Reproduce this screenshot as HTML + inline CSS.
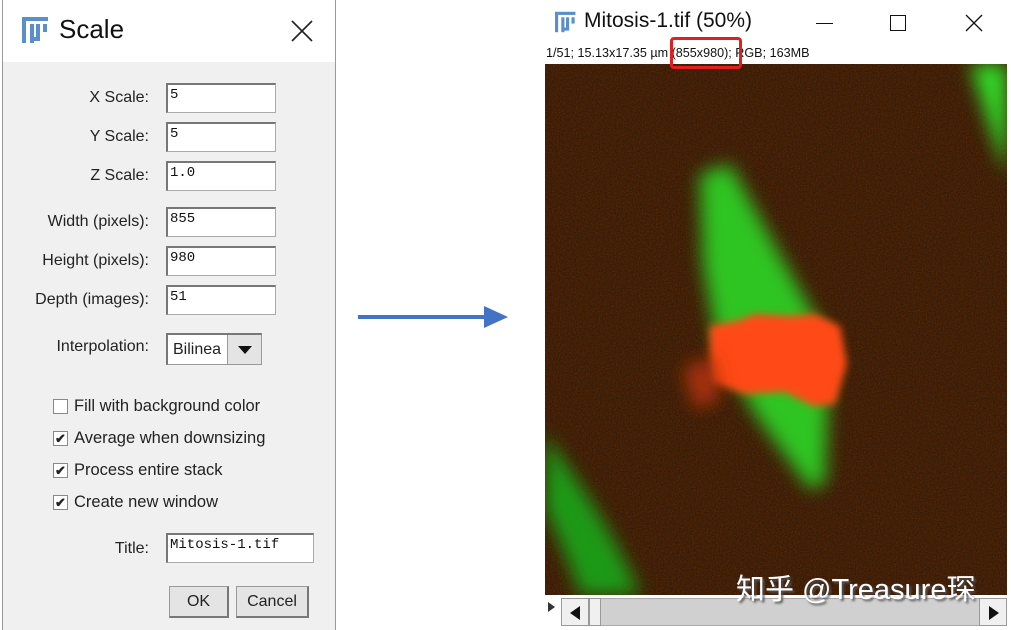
<!DOCTYPE html>
<html><head><meta charset="utf-8">
<style>
*{box-sizing:border-box;margin:0;padding:0}
body{width:1011px;height:630px;background:#fff;position:relative;overflow:hidden;font-family:"Liberation Sans","Noto Sans CJK SC",sans-serif;color:#222}
.abs{position:absolute}
.dlg{left:2px;top:0;width:334px;height:630px;border-left:1px solid #999;border-right:1px solid #999;background:#f0f0f0}
.tb{left:0;top:0;width:332px;height:62px;background:#fff}
.lbl{font-size:16px;text-align:right;width:146px;left:0}
.fld{background:#fff;border:1px solid #aaa;border-top:2px solid #777;border-left:2px solid #777;height:30px;font-family:"Liberation Mono",monospace;font-size:14px;padding:2px 0 0 2px;color:#111}
.chk{width:15px;height:15px;border:1px solid #888;background:#fff;left:50px;font-size:13px;line-height:13px;text-align:center;font-weight:bold}
.ct{left:71px;font-size:16.5px}
.btn{background:#e4e4e4;border:1px solid #999;border-bottom:2px solid #777;border-right:2px solid #777;height:32px;font-size:16px;text-align:center;line-height:30px}
</style></head><body>
<div class="abs dlg">
 <div class="abs tb"></div>
 <svg class="abs" style="left:19px;top:17px" width="28" height="26" viewBox="0 0 28 26"><rect x="0" y="0" width="4" height="26" fill="#5b8fc9"/><rect x="4" y="0" width="22" height="4" fill="#5b8fc9"/><rect x="8" y="7" width="4" height="19" fill="#5b8fc9"/><rect x="14" y="7" width="4" height="15" fill="#5b8fc9"/><rect x="10" y="20" width="8" height="4" fill="#5b8fc9"/><rect x="21" y="7" width="4" height="8" fill="#5b8fc9"/></svg>
 <div class="abs" style="left:56px;top:14px;font-size:26px;color:#111">Scale</div>
 <svg class="abs" style="left:287px;top:19px" width="24" height="24"><path d="M2 2L22 22M22 2L2 22" stroke="#222" stroke-width="1.6"/></svg>
 <div class="abs lbl" style="top:89px">X Scale:</div><div class="abs fld" style="left:163px;top:83px;width:110px">5</div>
 <div class="abs lbl" style="top:128px">Y Scale:</div><div class="abs fld" style="left:163px;top:122px;width:110px">5</div>
 <div class="abs lbl" style="top:167px">Z Scale:</div><div class="abs fld" style="left:163px;top:161px;width:110px">1.0</div>
 <div class="abs lbl" style="top:213px">Width (pixels):</div><div class="abs fld" style="left:163px;top:207px;width:110px">855</div>
 <div class="abs lbl" style="top:252px">Height (pixels):</div><div class="abs fld" style="left:163px;top:246px;width:110px">980</div>
 <div class="abs lbl" style="top:291px">Depth (images):</div><div class="abs fld" style="left:163px;top:285px;width:110px">51</div>
 <div class="abs lbl" style="top:338px">Interpolation:</div>
 <div class="abs" style="left:163px;top:333px;width:96px;height:32px;border:1px solid #999;border-top:2px solid #777;border-left:2px solid #777;background:#fff"><span class="abs" style="left:5px;top:6px;font-size:16px">Bilinea</span><div class="abs" style="left:59px;top:0;width:34px;height:29px;background:#e4e4e4;border-left:1px solid #999"><svg class="abs" style="left:10px;top:11px" width="14" height="8"><path d="M0 0H14L7 8Z" fill="#111"/></svg></div></div>
 <div class="abs chk" style="top:399px"></div><div class="abs ct" style="top:397px">Fill with background color</div>
 <div class="abs chk" style="top:431px">✔</div><div class="abs ct" style="top:429px">Average when downsizing</div>
 <div class="abs chk" style="top:463px">✔</div><div class="abs ct" style="top:461px">Process entire stack</div>
 <div class="abs chk" style="top:495px">✔</div><div class="abs ct" style="top:493px">Create new window</div>
 <div class="abs lbl" style="top:540px">Title:</div><div class="abs fld" style="left:163px;top:533px;width:148px;font-family:'Liberation Mono','Noto Sans CJK SC',monospace">Mitosis-1.tif</div>
 <div class="abs btn" style="left:166px;top:586px;width:60px">OK</div>
 <div class="abs btn" style="left:233px;top:586px;width:73px">Cancel</div>
</div>
<svg class="abs" style="left:356px;top:305px" width="154" height="24"><path d="M2 12H130" stroke="#4472c4" stroke-width="4"/><path d="M128 1L152 12L128 23Z" fill="#4472c4"/></svg>
<svg class="abs" style="left:555px;top:11px" width="22" height="22" viewBox="0 0 28 26"><rect x="0" y="0" width="4" height="26" fill="#5b8fc9"/><rect x="4" y="0" width="22" height="4" fill="#5b8fc9"/><rect x="8" y="7" width="4" height="19" fill="#5b8fc9"/><rect x="14" y="7" width="4" height="15" fill="#5b8fc9"/><rect x="10" y="20" width="8" height="4" fill="#5b8fc9"/><rect x="21" y="7" width="4" height="8" fill="#5b8fc9"/></svg>
<div class="abs" style="left:584px;top:9px;font-size:21px;color:#111">Mitosis-1.tif (50%)</div>
<div class="abs" style="left:816px;top:23px;width:17px;height:1px;background:#111"></div>
<div class="abs" style="left:890px;top:15px;width:16px;height:16px;border:1px solid #111"></div>
<svg class="abs" style="left:965px;top:14px" width="18" height="18"><path d="M1 1L17 17M17 1L1 17" stroke="#111" stroke-width="1.3"/></svg>
<div class="abs" style="left:546px;top:46px;font-size:12.6px;color:#111;white-space:nowrap">1/51; 15.13x17.35 µm (855x980); RGB; 163MB</div>
<svg class="abs" style="left:545px;top:64px" width="462" height="531" viewBox="0 0 462 531">
<defs>
<filter id="b8" x="-50%" y="-50%" width="200%" height="200%"><feGaussianBlur stdDeviation="9"/></filter>
<filter id="b4" x="-50%" y="-50%" width="200%" height="200%"><feGaussianBlur stdDeviation="4"/></filter>
<filter id="n"><feTurbulence type="fractalNoise" baseFrequency="0.7" numOctaves="1" seed="3"/><feColorMatrix values="0.7 0 0 0 0  0 0.15 0 0 0  0 0 0 0 0  0 0 0 0.4 0"/></filter>
</defs>
<rect width="462" height="531" fill="#2a1409"/>
<rect width="462" height="531" filter="url(#n)"/>
<path d="M425 0H462V110C448 75 438 40 425 0Z" fill="#30d828" filter="url(#b8)"/>
<path d="M0 370C35 420 70 470 95 531H35C25 500 12 470 0 445Z" fill="#1e9a18" filter="url(#b8)"/>
<path d="M155 110L185 100L240 200L285 280L280 420L265 425L210 350L172 280L158 200Z" fill="#2ec424" filter="url(#b8)"/>
<path d="M165 262L195 256L210 250L245 252L270 250L295 262L302 300L290 340L268 342L240 328L200 330L165 318Z" fill="#ff4a12" filter="url(#b4)"/>
<path d="M138 305L168 292L175 335L150 345Z" fill="#a8300c" filter="url(#b8)"/>
</svg>
<div class="abs" style="left:670px;top:37px;width:72px;height:32px;border:3px solid #e02020;border-radius:4px"></div>
<svg class="abs" style="left:548px;top:602px" width="8" height="10"><path d="M0 0L7 5L0 10Z" fill="#333"/></svg>
<div class="abs" style="left:561px;top:598px;width:446px;height:28px;background:#d0d0d0;border:1px solid #aaa"></div>
<div class="abs" style="left:561px;top:598px;width:28px;height:28px;background:#f0f0f0;border:1px solid #999"><svg class="abs" style="left:8px;top:7px" width="10" height="14"><path d="M10 0V14L0 7Z" fill="#111"/></svg></div>
<div class="abs" style="left:589px;top:598px;width:12px;height:28px;background:#f0f0f0;border:1px solid #999"></div>
<div class="abs" style="left:979px;top:598px;width:28px;height:28px;background:#f0f0f0;border:1px solid #999"><svg class="abs" style="left:9px;top:7px" width="10" height="14"><path d="M0 0V14L10 7Z" fill="#111"/></svg></div>
<div class="abs" style="left:736px;top:572px;font-size:29px;line-height:36px;color:#fff;text-shadow:2px 2px 2px #555;white-space:nowrap;font-family:'Liberation Sans','Noto Sans CJK SC',sans-serif">知乎 @Treasure琛</div>
</body></html>
